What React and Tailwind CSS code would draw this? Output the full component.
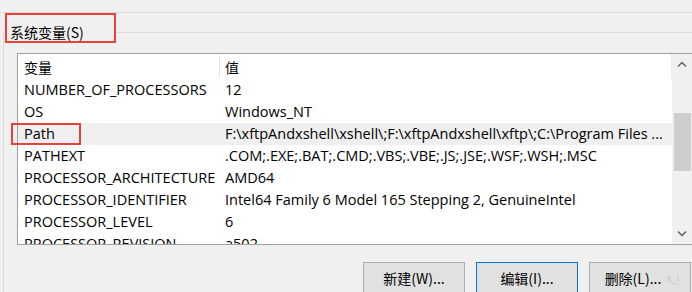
import React from "react";

const rows = [
  ["NUMBER_OF_PROCESSORS", "12"],
  ["OS", "Windows_NT"],
  ["Path", "F:\\xftpAndxshell\\xshell\\;F:\\xftpAndxshell\\xftp\\;C:\\Program Files ..."],
  ["PATHEXT", ".COM;.EXE;.BAT;.CMD;.VBS;.VBE;.JS;.JSE;.WSF;.WSH;.MSC"],
  ["PROCESSOR_ARCHITECTURE", "AMD64"],
  ["PROCESSOR_IDENTIFIER", "Intel64 Family 6 Model 165 Stepping 2, GenuineIntel"],
  ["PROCESSOR_LEVEL", "6"],
  ["PROCESSOR_REVISION", "a502"],
];

export default function App() {
  return (
    <div
      className="relative w-[692px] h-[292px] overflow-hidden bg-[#f0f0f0] text-[14px] text-[#000]"
      style={{ fontFamily: '"Segoe UI", "Open Sans", "Noto Sans CJK SC", sans-serif' }}
    >
      <div className="h-[13px] border-b border-[#d9d9d9]" />
      <div className="h-[19px]" />
      <div className="ml-[3px] border-l border-t border-[#d9d9d9]">
        <div className="h-[20px]" />
        <div className="ml-[13px] h-[192px] flex border-l border-t border-b border-[#a0a0a0]">
          <div className="flex-1 bg-white flex flex-col overflow-hidden">
            <div className="h-[25px] shrink-0 flex items-center">
              <div className="w-[201px] pl-[6px] pt-[1px]" style={{ fontFamily: '"Noto Sans CJK SC", sans-serif' }}>变量</div>
              <div className="h-[23px] border-l border-[#e5e5e5] pl-[5px] pt-[1px] flex items-center flex-1" style={{ fontFamily: '"Noto Sans CJK SC", sans-serif' }}>值</div>
              <div className="h-[25px] border-l border-[#ececec]" />
            </div>
            {rows.map(([k, v]) => (
              <div
                key={k}
                className={"h-[22px] shrink-0 flex items-center whitespace-nowrap text-[14.5px] " + (k === "Path" ? "bg-[#efefef]" : "")}
              >
                <div className="w-[201px] pl-[6px]">{k}</div>
                <div className="pl-[6px]">{v}</div>
              </div>
            ))}
          </div>
          <div className="w-[20px] bg-[#f0f0f0] flex flex-col items-center">
            <svg className="mt-[7px]" width="10" height="7" viewBox="0 0 10 7">
              <path d="M1 5.5 L5 1.5 L9 5.5" fill="none" stroke="#606060" strokeWidth="1.5" />
            </svg>
            <div className="mt-[45px] w-[17px] h-[58px] bg-[#cdcdcd]" />
            <div className="flex-1" />
            <svg className="mb-[7px]" width="10" height="7" viewBox="0 0 10 7">
              <path d="M1 1.5 L5 5.5 L9 1.5" fill="none" stroke="#606060" strokeWidth="1.5" />
            </svg>
          </div>
        </div>
        <div
          className="mt-[17px] ml-[359px] flex gap-[11px]"
          style={{ fontFamily: '"Noto Sans CJK SC", sans-serif' }}
        >
          <div className="w-[102px] h-[32px] shrink-0 bg-[#e1e1e1] border border-[#adadad] flex items-center justify-center">新建(W)...</div>
          <div className="w-[102px] h-[32px] shrink-0 bg-[#e1e1e1] border border-[#0078d7] flex items-center justify-center">编辑(I)...</div>
          <div className="w-[102px] h-[32px] shrink-0 bg-[#e1e1e1] border border-[#adadad] flex items-center justify-center pr-[14px]">删除(L)...</div>
        </div>
      </div>

      <div
        className="absolute left-[5px] top-[13px] w-[111px] h-[30px] border-2 border-[#e8403c] bg-[#f0f0f0] flex items-center pl-[3px] pt-[8px]"
        style={{ fontFamily: '"Noto Sans CJK SC", sans-serif' }}
      >
        系统变量(S)
      </div>
      <div className="absolute left-[11px] top-[123px] w-[70px] h-[22px] border-2 border-[#e8403c]" />
      <div className="absolute left-[666px] top-[270px] text-[11px] text-[#c8c8c8]">x_i</div>
    </div>
  );
}
